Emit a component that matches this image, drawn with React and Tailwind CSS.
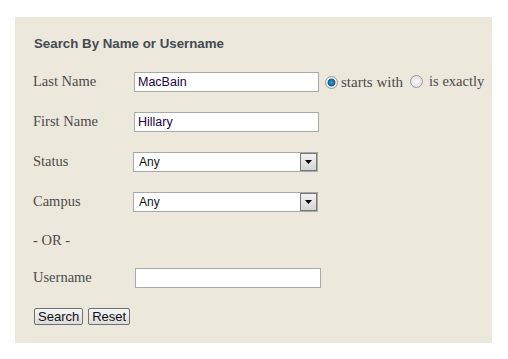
import { useState } from "react";

const serif = "font-['Liberation_Serif',serif] text-[14.5px] text-[#4b4b4b]";
const sans = "font-['Liberation_Sans',Arial,sans-serif]";

function Radio({ checked, onClick }) {
  return (
    <span
      onClick={onClick}
      className={`inline-block w-[13px] h-[13px] rounded-full border border-[#9a9a9a] cursor-pointer ${
        checked
          ? "bg-[radial-gradient(circle,#3aa0d8_0%,#0a5d96_45%,#e8e8e8_55%,#f4f4f4_100%)]"
          : "bg-[radial-gradient(circle,#f8f8f8_0%,#d8d8d8_100%)]"
      }`}
    />
  );
}

function FakeSelect({ value }) {
  return (
    <div className="flex w-[185px] h-[20px] bg-white border border-[#a9a9a9]">
      <div className={`${sans} flex-1 text-[12px] leading-[18px] pl-[5px] text-[#111]`}>{value}</div>
      <div className="w-[17px] h-[18px] border border-[#777] bg-gradient-to-b from-[#f4f4f4] to-[#d4d4d4] flex items-center justify-center">
        <svg width="7" height="4" viewBox="0 0 7 4">
          <path d="M0 0h7L3.5 4z" fill="#000" />
        </svg>
      </div>
    </div>
  );
}

function TextBox({ value, onChange, w = "w-[185px]" }) {
  return (
    <input
      value={value}
      onChange={(e) => onChange(e.target.value)}
      className={`${sans} ${w} h-[20px] px-[3px] text-[12.5px] text-[#220044] bg-white border border-[#a9a9a9] outline-none`}
    />
  );
}

function Btn({ children }) {
  return (
    <button
      className={`${sans} h-[17px] px-[3px] text-[13px] leading-[15px] text-[#111] border border-[#707070] rounded-[2px] bg-gradient-to-b from-[#f6f6f6] to-[#dcdcdc]`}
    >
      {children}
    </button>
  );
}

export default function App() {
  const [last, setLast] = useState("MacBain");
  const [first, setFirst] = useState("Hillary");
  const [user, setUser] = useState("");
  const [mode, setMode] = useState("starts");

  return (
    <div className="w-[508px] h-[359px] bg-white pt-[17px] pl-[15px]">
      <div className="w-[477px] h-[326px] bg-[#ece8dc] pl-[18px] pt-[19px]">
        <div className={`${sans} font-bold text-[13.3px] leading-[16px] text-[#444a52] pl-[1px]`}>
          Search By Name or Username
        </div>

        <div className="flex items-center mt-[20px] h-[20px]">
          <div className={`${serif} w-[101px]`}>Last Name</div>
          <TextBox value={last} onChange={setLast} />
          <div className="flex items-center ml-[6px]">
            <Radio checked={mode === "starts"} onClick={() => setMode("starts")} />
            <span className={`${serif} !text-[15px] ml-[3px]`}>starts with</span>
            <span className="ml-[7px]">
              <Radio checked={mode === "exact"} onClick={() => setMode("exact")} />
            </span>
            <span className={`${serif} ml-[6px]`}>is exactly</span>
          </div>
        </div>

        <div className="flex items-center mt-[20px] h-[20px]">
          <div className={`${serif} w-[101px]`}>First Name</div>
          <TextBox value={first} onChange={setFirst} />
        </div>

        <div className="flex items-center mt-[20px] h-[20px]">
          <div className={`${serif} w-[100px]`}>Status</div>
          <FakeSelect value="Any" />
        </div>

        <div className="flex items-center mt-[20px] h-[20px]">
          <div className={`${serif} w-[100px]`}>Campus</div>
          <FakeSelect value="Any" />
        </div>

        <div className={`${serif} mt-[18px] h-[20px] leading-[20px]`}>- OR -</div>

        <div className="flex items-center mt-[18px] h-[20px]">
          <div className={`${serif} w-[102px]`}>Username</div>
          <TextBox value={user} onChange={setUser} w="w-[186px]" />
        </div>

        <div className="flex items-center gap-[5px] mt-[20px] pl-[1px]">
          <Btn>Search</Btn>
          <Btn>Reset</Btn>
        </div>
      </div>
    </div>
  );
}
